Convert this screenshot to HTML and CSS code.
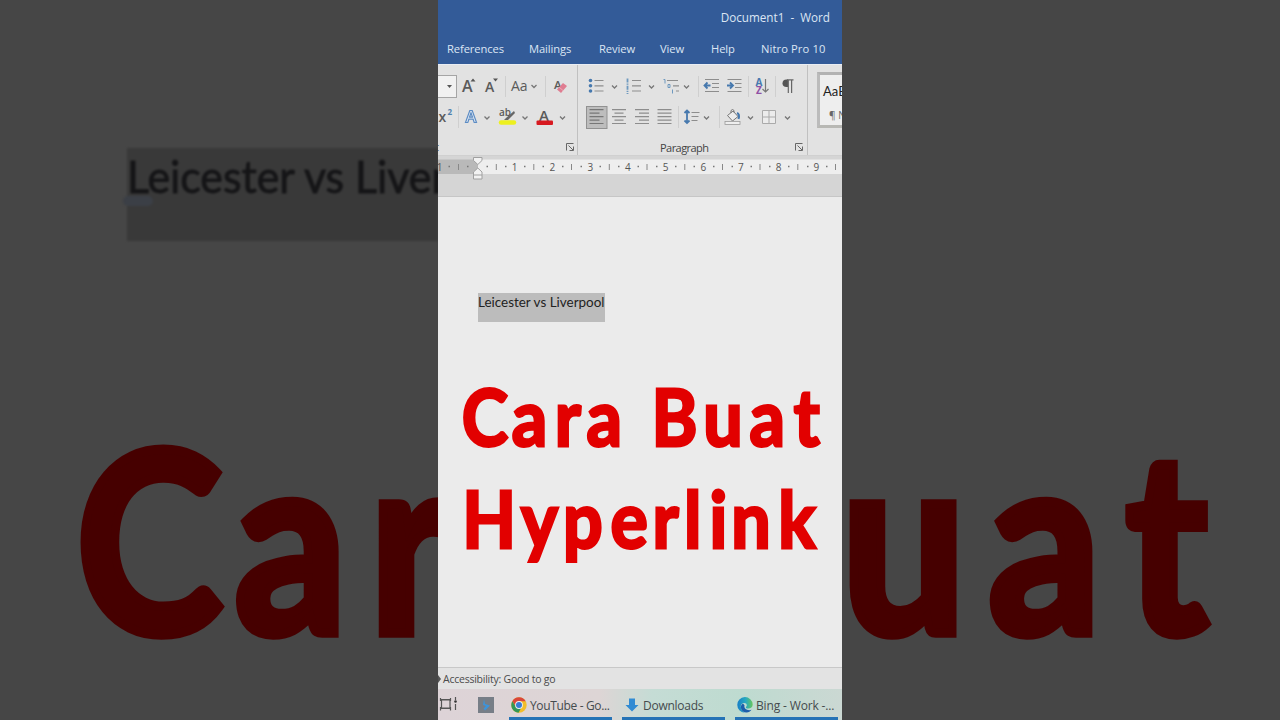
FILE: index.html
```html
<!DOCTYPE html>
<html lang="id">
<head>
<meta charset="utf-8">
<title>Cara Buat Hyperlink</title>
<link rel="stylesheet" href="styles.css">
</head>
<body>
<main class="stage">
  <aside class="side side-left">
    <div class="ghost-selection"><svg class="ghost-line" viewBox="127 148 311 93" width="311" height="93"><rect x="123" y="196" width="30" height="10" rx="5" fill="#3b3f46" stroke="none"/><text x="127" y="193" textLength="320" lengthAdjust="spacingAndGlyphs">Leicester vs Liver</text></svg></div>
    <svg class="ghost-title" viewBox="0 420 438 240" width="438" height="240"><text transform="translate(5 633) scale(2.788 3.168)" y="0" x="25.600 82.400 130.700">Car</text></svg>
  </aside>

  <section class="window">
    <header class="titlebar">Document1&nbsp; -&nbsp; Word</header>
    <nav class="tabs">
      <span class="tab references">References</span><span class="tab mailings">Mailings</span><span class="tab review">Review</span><span class="tab view">View</span><span class="tab help">Help</span><span class="tab nitro">Nitro Pro 10</span>
    </nav>

    <div class="ribbon">
      <div class="group font-group">
        <div class="row">
          <div class="combo"><svg viewBox="0 0 6 4" width="5" height="3.500"><path d="M0 0h6L3 3.500z" fill="#555"/></svg></div>
          <svg viewBox="457 75 24 23" width="24" height="23"><text class="glyph" x="462" y="92" font-size="16">A</text><path d="M470.500 81.500l2.500-3 2.500 3z" fill="#555"/></svg>
          <svg viewBox="481 75 24 23" width="24" height="23"><text class="glyph" x="485" y="92" font-size="14">A</text><path d="M493 78.500h5l-2.500 3z" fill="#555"/></svg>
          <svg viewBox="505 75 40 23" width="40" height="23"><path class="sep" d="M505.500 76v21"/><text class="glyph thin" x="511" y="91" font-size="14" textLength="16.500">Aa</text><path class="chev" d="M531.500 85l2.500 2.500 2.500-2.500"/></svg>
          <svg viewBox="545 75 32 23" width="32" height="23"><path class="sep" d="M545.500 76v21"/><text class="glyph" x="554" y="89" font-size="11.500">A</text><path d="M557 89.500l6-6.500 4 3-6 7z" fill="#df7d91"/><path d="M559 87l4 3.500" stroke="#efb6c0" stroke-width=".8"/></svg>
        </div>
        <div class="row second">
          <svg viewBox="438 105 20 25" width="20" height="25"><text class="glyph" x="438.500" y="122" font-size="14">x</text><text x="447.500" y="115" font-size="8" font-weight="700" fill="#4c7fac">2</text></svg>
          <svg viewBox="458 105 36 25" width="36" height="25"><path class="sep" d="M458.500 106v22"/><path d="M465.500 122.500l4.300-12h2.400l4.300 12h-2.300l-1.100-3.300h-4.200l-1.100 3.300z M469.500 117.200h3l-1.500-4.300z" fill="#e9eef4" stroke="#5c8cc4" stroke-width="1.200"/><path class="chev" d="M484.500 116.500l2.500 2.500 2.500-2.500"/></svg>
          <svg viewBox="494 105 38 25" width="38" height="25"><text class="glyph" x="499" y="116" font-size="10">ab</text><path d="M514 111l-8 7-2 2h4l7-7z" fill="#666"/><path d="M501 122.500h13" stroke="#edf01f" stroke-width="4.500" stroke-linecap="round"/><path class="chev" d="M522.500 116.500l2.500 2.500 2.500-2.500"/></svg>
          <svg viewBox="532 105 45 25" width="45" height="25"><text class="glyph" x="539" y="121" font-size="15">A</text><rect x="536.500" y="120.500" width="16.500" height="4.500" rx="1" fill="#d71920"/><path class="chev" d="M560 116.500l2.500 2.500 2.500-2.500"/></svg>
        </div>
        <div class="caption"><span class="cut">t</span><svg class="launcher" viewBox="0 0 8 8" width="8" height="8"><path d="M7.500 .5H.5v7M2.500 2.500l4.500 4.500M7.500 3.500v4h-4" fill="none" stroke="#666"/></svg></div>
      </div>

      <div class="group paragraph-group">
        <div class="row">
          <svg viewBox="578 75 43 23" width="43" height="23"><g fill="#4779ae"><circle cx="590.500" cy="80.500" r="1.800"/><circle cx="590.500" cy="85.800" r="1.800"/><circle cx="590.500" cy="91" r="1.800"/></g><path class="line" d="M594.500 80.500h9M594.500 85.800h9M594.500 91h9"/><path class="chev" d="M612 85.500l2.500 2.500 2.500-2.500"/></svg>
          <svg viewBox="621 75 36 23" width="36" height="23"><path d="M627.500 78.500v15.500" fill="none" stroke="#6e99bf" stroke-width="1.800" stroke-dasharray="4 1 1.200 1"/><path class="line" d="M632 80.500h9M632 85.800h9M632 91h9"/><path class="chev" d="M649 85.500l2.500 2.500 2.500-2.500"/></svg>
          <svg viewBox="657 75 41 23" width="41" height="23"><path d="M663.500 79.500h1.500v4M668 84.500h2v3h-2zM672.500 89.500v4" fill="none" stroke="#6e99bf"/><path class="line" d="M667 80.500h11M673 85.800h6M676 91h3"/><path class="chev" d="M684 85.500l2.500 2.500 2.500-2.500"/></svg>
          <svg viewBox="698 75 25 23" width="25" height="23"><path class="sep" d="M698.500 76v21"/><path class="line" d="M705 79.500h14M712 83.500h7M712 87.500h7M705 91.500h14"/><path d="M710.500 85.500H705M707.500 82.500l-3 3 3 3" class="arrow"/></svg>
          <svg viewBox="723 75 25 23" width="25" height="23"><path class="line" d="M727.500 79.500h14M735 83.500h6.500M735 87.500h6.500M727.500 91.500h14"/><path d="M727 85.500h5.500M730 82.500l3 3-3 3" class="arrow"/></svg>
          <svg viewBox="748 75 27 23" width="27" height="23"><path class="sep" d="M748.500 76v21"/><text x="755.500" y="85.500" font-size="10" font-weight="700" fill="#4779ae">A</text><text x="756" y="94" font-size="10" font-weight="700" fill="#9050a5">Z</text><path d="M765.500 79v12.500M762.500 89l3 3 3-3" fill="none" stroke="#777" stroke-width="1.200"/></svg>
          <svg viewBox="775 75 31 23" width="31" height="23"><path class="sep" d="M775.500 76v21"/><path d="M788 79.500h-1.500a4 3.800 0 0 0 0 7.600h1.500z" fill="#555"/><path d="M787 79.800h6.500M788.300 80v13M791.600 80v13" fill="none" stroke="#666" stroke-width="1.200"/></svg>
        </div>
        <div class="row second">
          <svg viewBox="578 105 32 25" width="32" height="25"><rect x="586.500" y="106.500" width="20.500" height="22" fill="#bdbdbd" stroke="#919191"/><path class="line dark" d="M589.500 109.700h14M589.500 113.200h10M589.500 116.700h14M589.500 120.200h10M589.500 123.500h14"/></svg>
          <svg viewBox="610 105 22 25" width="22" height="25"><path class="line" d="M612 109.700h14M614.500 113.200h9M612 116.700h14M614.500 120.200h9M612 123.500h14"/></svg>
          <svg viewBox="632 105 22 25" width="22" height="25"><path class="line" d="M635 109.700h14M639 113.200h10M635 116.700h14M639 120.200h10M635 123.500h14"/></svg>
          <svg viewBox="654 105 24 25" width="24" height="25"><path class="line" d="M657.500 109.700h14M657.500 113.200h14M657.500 116.700h14M657.500 120.200h14M657.500 123.500h14"/></svg>
          <svg viewBox="678 105 41 25" width="41" height="25"><path class="sep" d="M678.500 106v22"/><path class="arrow" d="M687 111v11M684.500 113l2.500-2.500 2.500 2.500M684.500 120.500l2.500 2.500 2.500-2.500"/><path class="line" d="M691.500 112.500h8M691.500 116.500h7M691.500 120.500h6"/><path class="chev" d="M704 116.500l2.500 2.500 2.500-2.500"/></svg>
          <svg viewBox="719 105 37 25" width="37" height="25"><path class="sep" d="M719.500 106v22"/><path d="M727.500 115.500l5.500-4.500 5 5.500-5.500 4.500zM731 113v-2.500q1.500-2 3 0v2" fill="#ececec" stroke="#777"/><path d="M737 113q3 1 1.500 6" fill="none" stroke="#4779ae" stroke-width="2"/><rect x="725" y="121.500" width="15" height="3" fill="#eee" stroke="#999" stroke-width=".8"/><path class="chev" d="M748 116.500l2.500 2.500 2.500-2.500"/></svg>
          <svg viewBox="756 105 50 25" width="50" height="25"><path d="M762.500 110.500h13v13h-13zM769 110.500v13M762.500 117h13" fill="#ececec" stroke="#aaa"/><path class="chev" d="M785 116.500l2.500 2.500 2.500-2.500"/></svg>
        </div>
        <div class="caption"><span class="group-name">Paragraph</span><svg class="launcher" viewBox="0 0 8 8" width="8" height="8"><path d="M7.500 .5H.5v7M2.500 2.500l4.500 4.500M7.500 3.500v4h-4" fill="none" stroke="#666"/></svg></div>
      </div>

      <div class="styles"><div class="style-card"><span class="sample">AaBb</span><span class="style-name">¶ No</span></div></div>
    </div>

    <svg class="ruler" viewBox="438 156 404 41" width="404" height="41">
      <rect x="438" y="156" width="404" height="41" fill="#d5d5d5"/>
      <rect x="438" y="159.500" width="40" height="14.500" fill="#b9b9b9"/>
      <rect x="478" y="159.500" width="364" height="14.500" fill="#eee"/>
      <g class="numbers"><text x="439.500" y="170.500">1</text><text x="514.500" y="170.500">1</text><text x="552.300" y="170.500">2</text><text x="590.300" y="170.500">3</text><text x="627.800" y="170.500">4</text><text x="665.500" y="170.500">5</text><text x="703.300" y="170.500">6</text><text x="740.800" y="170.500">7</text><text x="778.500" y="170.500">8</text><text x="816.300" y="170.500">9</text></g>
      <path d="M458.500 164v6M496.300 164v6M533.800 164v6M571.500 164v6M609.300 164v6M647 164v6M684.800 164v6M722.500 164v6M760 164v6M797.800 164v6M835.500 164v6" stroke="#888"/>
      <path d="M448.500 166.500h1.500M467 166.500h1.500M486.500 166.500h1.500M505 166.500h1.500M524 166.500h1.500M542.500 166.500h1.500M562 166.500h1.500M580.500 166.500h1.500M599.500 166.500h1.500M618 166.500h1.500M637.500 166.500h1.500M656 166.500h1.500M675 166.500h1.500M693.500 166.500h1.500M713 166.500h1.500M731.500 166.500h1.500M750.500 166.500h1.500M769 166.500h1.500M788 166.500h1.500M807 166.500h1.500M826 166.500h1.500" stroke="#777" stroke-width="1.500"/>
      <path d="M473.500 157.500h8.500v3l-4.200 4-4.300-4zM473.500 179v-7l4.300-4 4.200 4v7zM473.500 175h8.500" fill="#f2f2f2" stroke="#a0a0a0"/>
      <path d="M438 196.500h404" stroke="#c6c6c6"/>
    </svg>

    <article class="page">
      <p class="selected"><svg viewBox="478 293 127 29" width="127" height="29"><text x="478" y="307" textLength="126.500" lengthAdjust="spacingAndGlyphs">Leicester vs Liverpool</text></svg></p>
      <svg class="headline" viewBox="0 370 404 210" width="404" height="210">
        <g transform="translate(1.200 0) scale(.885 1)">
          <text y="446" x="25.600 82 130.500 166.500">Cara</text>
          <text y="446" x="240 298.500 350.500 400.500">Buat</text>
          <text y="548" x="26 92.500 140 193.500 241 276.500 305.500 330 383">Hyperlink</text>
        </g>
      </svg>
    </article>

    <footer class="status"><svg viewBox="0 0 4 10" width="4" height="10"><path d="M0 1l3 4-3 4z" fill="#555"/></svg><span>Accessibility: Good to go</span></footer>
    <div class="taskbar">
      <svg class="task-view" viewBox="438 690 30 30" width="30" height="30"><path d="M440.500 702v-3M450.500 702v-3M440.500 700.500h10M441.500 701v8h8.500v-8zM440.500 708v3.500M450.500 708v3.500M440.500 709.500h10M455.500 698v3M455.500 705v6" fill="none" stroke="#555" stroke-width="1.200"/><circle cx="455.500" cy="702.500" r="1.300" fill="#333"/></svg>
      <svg class="app" viewBox="468 689 41 31" width="41" height="31"><rect x="478" y="697" width="16" height="16" fill="#777e87"/><path d="M484 699l1 5 5 1.500-5 5-1.500-2 2.500-2.500-3-1z" fill="#3c94dc"/></svg>
      <div class="task first"><svg viewBox="0 0 16 16" width="16" height="16"><circle cx="8" cy="8" r="7.700" fill="#f2bd29"/><path d="M1.300 4.200A7.700 7.700 0 0 1 14.700 4.200H8L5 9.800z" fill="#d9473b"/><path d="M1.300 4.200A7.700 7.700 0 0 0 7.500 15.700l3.200-5.600H5z" fill="#329757"/><circle cx="8" cy="8" r="3.900" fill="#eee"/><circle cx="8" cy="8" r="3" fill="#387cd4"/></svg><span class="youtube">YouTube - Go...</span></div>
      <div class="task"><svg viewBox="0 0 16 16" width="16" height="16"><path d="M5 1.500h6V8h3.500L8 14.500 1.500 8H5z" fill="#318bd3"/></svg><span class="downloads">Downloads</span></div>
      <div class="task"><svg viewBox="0 0 16 16" width="16" height="16"><defs><linearGradient id="edge"><stop stop-color="#187fc7"/><stop offset=".55" stop-color="#27aac0"/><stop offset="1" stop-color="#69c75b"/></linearGradient></defs><path d="M.3 8A7.700 7.700 0 0 1 15.700 7.500c0 2.700-2 4-4.500 4-2 0-2.800-.8-2-1.700C11 7.500 8.500 5.500 6 6.300 2.700 7.400 3 12.500 7.600 15.700A7.700 7.700 0 0 1 .3 8z" fill="url(#edge)"/><path d="M6 6.500c-4 2-2 9 3.500 9.100 2.200 0 4-1.200 5-2.800-4 1.300-8-1-7-4.500z" fill="#1b5eab"/></svg><span class="bing">Bing - Work -...</span></div>
    </div>
  </section>

  <aside class="side side-right"><svg class="ghost-title" viewBox="842 420 438 240" width="438" height="240"><text transform="translate(5 633) scale(2.788 3.168)" y="0" x="300 352.800 402">uat</text></svg></aside>
</main>
</body>
</html>
```
FILE: styles.css
```css
* { box-sizing: border-box; }
body { margin: 0; background: #464646; font-family: "Open Sans", "Noto Sans", sans-serif; }
svg { display: block; flex: none; }
.stage { display: flex; width: 1280px; height: 720px; overflow: hidden; }
.side { width: 438px; height: 720px; background: #464646; overflow: hidden; display: flex; flex-direction: column; }
.side-left { padding-top: 148px; }
.side-right { padding-top: 420px; }
.ghost-selection { margin-left: 127px; height: 93px; background: #393939; filter: blur(.8px); }
.ghost-line { font: 44px Lato, sans-serif; fill: #151517; stroke: #151517; stroke-width: .8px; overflow: visible; }
.side-left .ghost-title { margin-top: 179px; }
.ghost-title { font: 700 79px Lato, sans-serif; fill: #460000; stroke: #460000; stroke-width: 3px; }

.window { width: 404px; height: 720px; display: flex; flex-direction: column; background: #ebebeb; overflow: hidden; flex: none; }
.titlebar { height: 35px; padding: 0 12px 0 0; background: #335b98; color: #dce6f4; font-size: 11.700px; line-height: 35px; text-align: right; white-space: nowrap; }
.tabs { display: flex; height: 29px; background: #335b98; color: #dce6f4; font-size: 11.200px; line-height: 28px; white-space: nowrap; padding-left: 9px; }
.tab { flex: none; letter-spacing: -.1px; }
.references { width: 82px; }
.mailings { width: 70px; }
.review { width: 61px; }
.view { width: 51px; }
.help { width: 50px; }
.nitro { letter-spacing: .1px; }

.ribbon { display: flex; height: 92px; background: #e2e2e2; border-top: 1px solid #e9edf3; border-bottom: 1px solid #d0d0d0; }
.group { padding-top: 10px; height: 90px; border-right: 1px solid #c0c0c0; overflow: hidden; }
.font-group { width: 140px; }
.paragraph-group { width: 230px; }
.row { display: flex; height: 23px; }
.second { height: 25px; margin-top: 7px; }
.combo { width: 19px; height: 23px; border: 1px solid #a5a5a5; border-left: 0; background: #f1f1f1; display: flex; align-items: center; padding-left: 9px; }
.glyph { font-weight: 600; fill: #5a5a5a; }
.thin { font-weight: 400; }
.sep { stroke: #cfcfcf; }
.chev { fill: none; stroke: #777; stroke-width: 1.300px; }
.line { stroke: #8d8d8d; stroke-width: 1.200px; }
.dark { stroke: #777; }
.arrow { fill: none; stroke: #4779ae; stroke-width: 1.800px; }
.caption { display: flex; justify-content: space-between; align-items: center; margin-top: 9px; height: 16px; color: #444; font-size: 11px; line-height: 16px; padding-right: 3px; }
.cut { margin-left: -3px; }
.group-name { margin: 2px 0 0 82px; letter-spacing: -.55px; }
.paragraph-group .caption { padding-right: 4px; }
.styles { width: 34px; padding: 7px 0 0 9px; overflow: hidden; }
.style-card { width: 50px; height: 56px; border: 3px solid #bbb; border-color: #b2b2b2 #bbb #b8b8b4; background: #eee; display: flex; flex-direction: column; white-space: nowrap; }
.sample { font: 13px/18px Lato, sans-serif; color: #222; padding: 7px 0 0 3px; }
.style-name { font-size: 10px; line-height: 18px; color: #666; padding: 6px 0 0 9px; }
.numbers { font-size: 10px; text-anchor: middle; fill: #555; }

.page { height: 471px; padding-top: 96px; background: #ebebeb; }
.selected { margin: 0 0 0 40px; width: 127px; height: 29px; background: #bcbcbc; font: 13.5px Lato, sans-serif; }
.selected text { fill: #222; }
.headline { margin-top: 48px; font: 700 79px Lato, sans-serif; fill: #e20000; stroke: #e20000; stroke-width: 3px; }
.status { display: flex; align-items: center; height: 22px; background: #e3e3e3; border-top: 1px solid #c8c8c8; color: #4b4b4b; font-size: 10.500px; letter-spacing: -.24px; gap: 1px; white-space: nowrap; }
.taskbar { display: flex; height: 31px; background: linear-gradient(90deg, #ddd3d7, #ddd5d5 40%, #c5dcd5 53%, #bedbd0 75%, #cbd8d3); }
.task { width: 103px; height: 31px; margin-right: 10px; border-bottom: 3px solid #2573b6; padding-left: 2px; display: flex; align-items: center; gap: 3px; color: #454b4e; font-size: 12px; white-space: nowrap; flex: none; }
.task svg { margin-top: 3px; }
.task span { margin-top: 5px; }
.downloads { letter-spacing: -.25px; }
.youtube { letter-spacing: -.35px; }
.bing { letter-spacing: -.15px; }
```
